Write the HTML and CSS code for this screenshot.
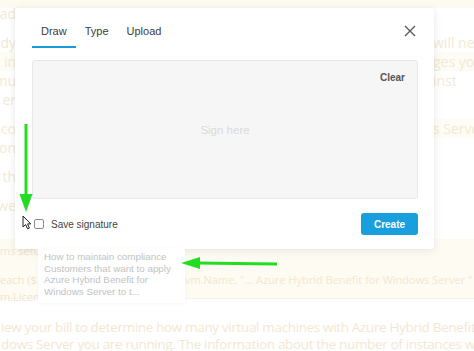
FILE: index.html
```html
<!DOCTYPE html>
<html>
<head>
<meta charset="utf-8">
<link rel="stylesheet" href="styles.css">
</head>
<body>
<div class="page">
  <div class="topband"></div>
  <div class="bg-line first"><span class="l">ead</span><span class="r"></span></div>
  <div class="para">
    <div class="bg-line"><span class="l">dy</span><span class="r">will need</span></div>
    <div class="bg-line"><span class="l hl">t in</span><span class="r hl">ges you</span></div>
    <div class="bg-line"><span class="l">mu</span><span class="r">inst</span></div>
    <div class="bg-line"><span class="l">er</span><span class="r"></span></div>
  </div>
  <div class="para">
    <div class="bg-line"><span class="l">co</span><span class="r hl">s Server</span></div>
    <div class="bg-line"><span class="l">tion</span><span class="r"></span></div>
  </div>
  <div class="para">
    <div class="bg-line"><span class="l">th</span><span class="r"></span></div>
  </div>
  <div class="para">
    <div class="bg-line"><span class="l">we</span><span class="r"></span></div>
  </div>
  <div class="code">
    <div class="code-line">ms setup</div>
    <div class="code-line gap"><span class="cl">each ($</span><span class="cr">vm.Name, "... Azure Hybrid Benefit for Windows Server "</span></div>
    <div class="code-line">m.Licens</div>
  </div>
  <div class="article">
    <p>iew your bill to determine how many virtual machines with Azure Hybrid Benefit f</p>
    <p>dows Server you are running. The information about the number of instances wit</p>
  </div>
</div>

<div class="modal">
  <div class="modal-head">
    <div class="tabs">
      <span class="tab active">Draw</span>
      <span class="tab">Type</span>
      <span class="tab">Upload</span>
    </div>
    <button class="close" aria-label="Close">
      <svg width="12" height="12" viewBox="0 0 12 12"><path d="M1 1 L11 11 M11 1 L1 11" stroke="#555" stroke-width="1.3" fill="none"/></svg>
    </button>
  </div>
  <div class="canvas">
    <span class="clear">Clear</span>
    <span class="placeholder">Sign here</span>
  </div>
  <div class="modal-foot">
    <label class="save"><span class="box"></span><span>Save signature</span></label>
    <button class="create">Create</button>
  </div>
</div>

<div class="popup">
  <div>How to maintain compliance</div>
  <div>Customers that want to apply</div>
  <div>Azure Hybrid Benefit for</div>
  <div>Windows Server to t...</div>
</div>

<svg class="arrow-v" width="16" height="92" viewBox="0 0 16 92">
  <path d="M8 0 L8 74" stroke="#22dd22" stroke-width="3" fill="none"/>
  <path d="M1.5 70 L14.5 70 L8 88 Z" fill="#22dd22"/>
</svg>

<svg class="arrow-h" width="98" height="16" viewBox="0 0 98 16">
  <path d="M16 7 L96 8" stroke="#22dd22" stroke-width="3" fill="none"/>
  <path d="M0 7 L19 1 L19 13 Z" fill="#22dd22"/>
</svg>

<svg class="cursor" width="11" height="15" viewBox="0 0 11 15">
  <path d="M1 1 L1 12 L3.6 9.6 L5.6 13.8 L7.4 13 L5.5 8.9 L8.8 8.9 Z" fill="#fff" stroke="#222" stroke-width="1" stroke-linejoin="round"/>
</svg>
</body>
</html>
```

FILE: styles.css
```css
* { box-sizing: border-box; }
html, body { margin: 0; padding: 0; }
body {
  width: 474px;
  height: 351px;
  overflow: hidden;
  position: relative;
  background: #ffffff;
  font-family: "Liberation Sans", Arial, sans-serif;
}

/* faded background article */
.page {
  width: 474px;
  color: #f3ead6;
  font-family: "Open Sans", "Liberation Sans", sans-serif;
  font-size: 14px;
}
.topband {
  height: 8px;
  background: #fdfbef;
}
.bg-line {
  display: flex;
  justify-content: space-between;
  height: 19px;
  line-height: 19px;
  white-space: nowrap;
}
.bg-line.first { margin-top: -3px; height: 18px; line-height: 18px; }
.para { margin-top: 10px; }
.l {
  width: 16px;
  display: flex;
  justify-content: flex-end;
  overflow: hidden;
}
.r {
  width: 41px;
  overflow: hidden;
}
.hl { background: #fefcf4; }

.code {
  margin-top: 24px;
  height: 60px;
  background: #fefbf3;
  border-bottom: 1px solid #f6f3ec;
  font-family: "Open Sans", "Liberation Sans", sans-serif;
  font-size: 11px;
  color: #f1e5cc;
  padding-top: 3px;
}
.code-line {
  display: flex;
  height: 17px;
  line-height: 17px;
  white-space: nowrap;
}
.code-line.gap { margin-top: 12px; }
.cl { width: 185px; }
.cr { color: #f2e7d0; }

.article {
  margin-top: 20px;
  font-size: 13.5px;
  letter-spacing: -0.35px;
  color: #f2e8d2;
}
.article p {
  margin: 0;
  height: 17px;
  line-height: 17px;
  white-space: nowrap;
  padding-left: 1px;
}

/* modal */
.modal {
  position: absolute;
  left: 15px;
  top: 8px;
  width: 419px;
  height: 241px;
  background: #fff;
  border-radius: 3px;
  box-shadow: 0 2px 10px rgba(0, 0, 0, 0.09), 0 0 2px rgba(0, 0, 0, 0.04);
  padding: 0 16px 14px 17px;
  display: flex;
  flex-direction: column;
}
.modal-head {
  display: flex;
  align-items: flex-start;
}
.tabs { display: flex; }
.tab {
  padding: 16px 9px 8px;
  font-size: 11px;
  line-height: 14px;
  color: #3d3d3d;
  border-bottom: 2px solid transparent;
}
.tab.active { border-bottom-color: #1b9ad8; }
.close {
  margin-left: auto;
  margin-top: 17px;
  margin-right: 2px;
  width: 12px;
  height: 12px;
  padding: 0;
  border: 0;
  background: none;
  display: flex;
}

.canvas {
  margin-top: 12px;
  height: 139px;
  background: #f6f6f6;
  border: 1px solid #e8e8e8;
  border-radius: 3px;
  display: grid;
}
.clear {
  grid-area: 1 / 1;
  justify-self: end;
  align-self: start;
  margin: 11px 12px 0 0;
  font-size: 10px;
  font-weight: bold;
  color: #555;
}
.placeholder {
  grid-area: 1 / 1;
  place-self: center;
  font-size: 11.5px;
  color: #dadada;
}

.modal-foot {
  margin-top: 14px;
  height: 22px;
  display: flex;
  align-items: center;
  justify-content: space-between;
}
.save {
  display: flex;
  align-items: center;
  gap: 7px;
  font-size: 10px;
  color: #444;
}
.box {
  width: 10px;
  height: 10px;
  margin-left: 2px;
  border: 1px solid #8a8a8a;
  border-radius: 2px;
  background: #fff;
}
.create {
  width: 57px;
  height: 22px;
  border: 0;
  border-radius: 3px;
  background: #199fde;
  color: #fff;
  font-family: "Liberation Sans", Arial, sans-serif;
  font-weight: bold;
  font-size: 10px;
  padding: 0;
}

/* popup over code */
.popup {
  position: absolute;
  left: 38px;
  top: 248px;
  width: 147px;
  height: 55px;
  padding: 3px 6px;
  background: rgba(255, 255, 255, 0.95);
  box-shadow: 0 1px 4px rgba(0, 0, 0, 0.04);
  font-family: "Liberation Sans", Arial, sans-serif;
  font-size: 9.8px;
  line-height: 11.7px;
  color: #c3c3c3;
  white-space: nowrap;
}

/* annotations */
.arrow-v { position: absolute; left: 18px; top: 124px; }
.arrow-h { position: absolute; left: 181px; top: 256px; }
.cursor { position: absolute; left: 22px; top: 215px; }
```
